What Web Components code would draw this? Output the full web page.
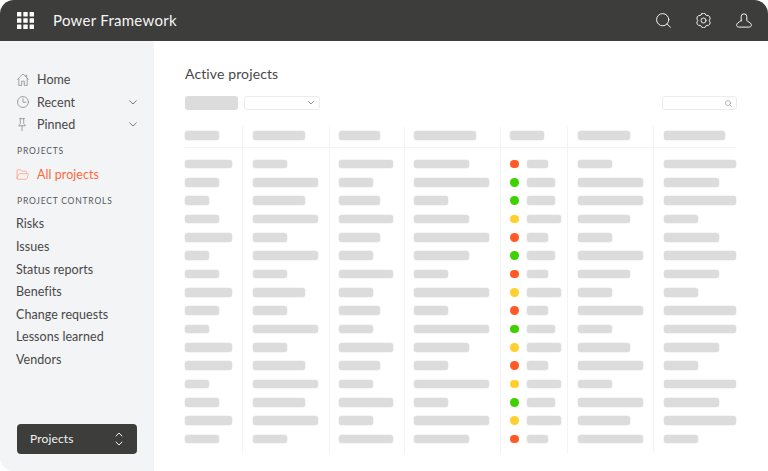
<!DOCTYPE html>
<html lang="en"><head><meta charset="utf-8"><title>Power Framework</title>
<style>html,body{margin:0;padding:0;background:#fff}body{font-family:"Lato","Noto Sans",sans-serif}</style></head>
<body>
<pf-app>
  <pf-topbar slot="top" title-text="Power Framework"></pf-topbar>
  <pf-sidebar slot="side">
    <pf-nav icon="home">Home</pf-nav>
    <pf-nav icon="clock" chevron>Recent</pf-nav>
    <pf-nav icon="pin" chevron>Pinned</pf-nav>
    <pf-label style="margin-top:8.500px">PROJECTS</pf-label>
    <pf-nav icon="folder" active style="margin-top:4.700px">All projects</pf-nav>
    <pf-label style="margin-top:8.700px">PROJECT CONTROLS</pf-label>
    <pf-nav plain style="margin-top:4.200px">Risks</pf-nav>
    <pf-nav plain>Issues</pf-nav>
    <pf-nav plain>Status reports</pf-nav>
    <pf-nav plain>Benefits</pf-nav>
    <pf-nav plain>Change requests</pf-nav>
    <pf-nav plain>Lessons learned</pf-nav>
    <pf-nav plain>Vendors</pf-nav>
    <pf-switch slot="foot">Projects</pf-switch>
  </pf-sidebar>
  <pf-main slot="main">
    <span slot="title">Active projects</span>
    <pf-toolbar slot="toolbar"></pf-toolbar>
    <pf-table slot="table"></pf-table>
  </pf-main>
</pf-app>
<script>
const def=(name,html,init)=>customElements.define(name,class extends HTMLElement{
  constructor(){super();this.attachShadow({mode:'open'}).innerHTML=html;}
  connectedCallback(){init&&init.call(this,this.shadowRoot);}
});
const s='fill="none" stroke="currentColor" stroke-linecap="round" stroke-linejoin="round"';
const ICONS={
 home:`<svg width="12" height="13" viewBox="0 0 12 13" ${s} stroke-width=".8"><path d="M.6 6.400 6 .9l5.400 5.500M1.800 5.600v6.800h2.900V8.200h2.600v4.200h2.900V5.600M8.600 2.200h1.200v1.900"/></svg>`,
 clock:`<svg width="12" height="12" viewBox="0 0 12 12" ${s} stroke-width=".8"><circle cx="6" cy="6" r="5.500"/><path d="M6 2.600V6.300H9"/></svg>`,
 pin:`<svg width="10" height="13" viewBox="0 0 10 13" ${s} stroke-width=".8"><path d="M2.600.6h4.800M3.300.6v5.200L1.600 7.800h6.800L6.700 5.800V.6M5 7.800v4.800"/></svg>`,
 folder:`<svg width="13" height="11" viewBox="0 0 13 11" ${s} stroke-width=".9"><path d="M1 9.600V1.600q0-.8.8-.8h2.700l1.200 1.400h4q.9 0 .9.9v.9M1 9.600q.1.700.8.700h8.200q.6 0 .9-.6l1.500-4.200q.2-.8-.6-.8H3.400q-.6 0-.8.6z"/></svg>`
};
const CHEV=`<svg width="8" height="5" viewBox="0 0 8 5" ${s} stroke-width="1"><path d="M.7.8 4 4 7.300.8"/></svg>`;
const gear=(()=>{const c=7.5,p=(a,r)=>{const t=a*Math.PI/180;return (c+r*Math.cos(t)).toFixed(2)+' '+(c+r*Math.sin(t)).toFixed(2);};
 let d='';for(let k=0;k<6;k++){const a=k*60-90;d+=(k?'':'M'+p(a-15,6.9))+'Q'+p(a,7.9)+' '+p(a+15,6.9)+'Q'+p(a+30,4.7)+' '+p(a+45,6.9);}return d+'Z';})();

def('pf-app',`<style>:host{display:grid;grid-template-rows:41px 430px;width:768px;height:471px;overflow:hidden;background:#fff}
.b{display:flex;min-height:0}</style><slot name="top"></slot><div class="b"><slot name="side"></slot><slot name="main"></slot></div>`);

def('pf-topbar',`<style>:host{display:flex;align-items:center;background:#3d3d3b;color:#fff;border-radius:14px 14px 0 0;padding:0 16px 0 17px;height:41px;box-sizing:border-box}
.t{font-size:15px;letter-spacing:.28px;margin-left:19px;flex:1;color:#f6f6f5;padding-bottom:1px}
.r{display:flex;align-items:center;gap:25px;color:#f2f2f1}svg{display:block}</style>
<svg width="17" height="17" viewBox="0 0 17 17" fill="#fff"><rect width="4.400" height="4.400" rx=".5"/><rect x="6.300" width="4.400" height="4.400" rx=".5"/><rect x="12.600" width="4.400" height="4.400" rx=".5"/><rect y="6.300" width="4.400" height="4.400" rx=".5"/><rect x="6.300" y="6.300" width="4.400" height="4.400" rx=".5"/><rect x="12.600" y="6.300" width="4.400" height="4.400" rx=".5"/><rect y="12.600" width="4.400" height="4.400" rx=".5"/><rect x="6.300" y="12.600" width="4.400" height="4.400" rx=".5"/><rect x="12.600" y="12.600" width="4.400" height="4.400" rx=".5"/></svg>
<span class="t"></span>
<div class="r">
<svg width="15" height="15" viewBox="0 0 15 15" ${s} stroke-width="1"><circle cx="6.700" cy="6.700" r="6.100"/><path d="M11.200 11.100 14.500 14.400"/></svg>
<svg width="15" height="15" viewBox="0 0 15 15" ${s} stroke-width="1"><path d="${gear}"/><circle cx="7.500" cy="7.500" r="2.500"/></svg>
<svg width="16" height="15" viewBox="0 0 16 15" ${s} stroke-width="1"><path d="M5.200 7.800V3.600a2.800 2.800 0 0 1 5.600 0v4.200c0 .4 3.800 1.500 4.400 3.400.6 1.700-.3 2.900-2 2.900H2.800c-1.700 0-2.600-1.200-2-2.900.6-1.900 4.400-3 4.400-3.400z"/></svg>
</div>`,function(r){r.querySelector('.t').textContent=this.getAttribute('title-text');});

def('pf-sidebar',`<style>:host{display:flex;flex-direction:column;width:154px;flex:none;background:#f3f4f6;border-radius:0 0 0 14px;padding:27.200px 0 17px;box-sizing:border-box}
.f{margin-top:auto}</style><slot></slot><div class="f"><slot name="foot"></slot></div>`);

def('pf-nav',`<style>:host{display:flex;align-items:center;height:22.600px;color:#484848;font-size:12.500px;letter-spacing:.05px;padding:0 17px 0 17px;position:relative}
:host([plain]){padding-left:16px}
:host([active]){color:#ff6a3c}
.i{width:20px;flex:none;display:flex;color:#8b8d90}
:host([active]) .i{color:#ffa98c;margin-left:-1px;width:21px}
:host([plain]) .i{display:none}
.t{flex:1}svg{display:block}.c{color:#77797b;display:flex;margin-left:auto}</style>
<span class="i"></span><span class="t"><slot></slot></span><span class="c"></span>`,function(r){
 const ic=this.getAttribute('icon'); if(ic) r.querySelector('.i').innerHTML=ICONS[ic];
 if(this.hasAttribute('chevron')) r.querySelector('.c').innerHTML=CHEV;});

def('pf-label',`<style>:host{display:block;height:14px;line-height:14px;font-size:8.500px;letter-spacing:.8px;color:#55575a;padding-left:17px}</style><slot></slot>`);

def('pf-switch',`<style>:host{display:flex;align-items:center;justify-content:space-between;margin:0 17px;height:30px;width:120px;box-sizing:border-box;padding:0 14px 0 13px;background:#3d3d3b;color:#f4f4f3;border-radius:4px;font-size:12px;letter-spacing:.15px}svg{display:block}span{padding-bottom:1px}</style>
<span><slot></slot></span><svg width="8" height="14" viewBox="0 0 8 14" ${s} stroke-width="1"><path d="M1 4 4 1l3 3M1 10l3 3 3-3"/></svg>`);

def('pf-main',`<style>:host{display:flex;flex-direction:column;flex:1;min-width:0;padding:0 31px;box-sizing:border-box}
.h{height:18px;line-height:18px;margin-top:24px;font-size:14px;letter-spacing:.12px;color:#484848}
.tb{margin-top:13px}.tt{margin-top:16px}</style>
<div class="h"><slot name="title"></slot></div><div class="tb"><slot name="toolbar"></slot></div><div class="tt"><slot name="table"></slot></div>`);

def('pf-skel',`<style>:host{display:block;height:8.600px;background:#dcdcdc;border-radius:2.500px;box-shadow:0 0 0 .5px #eee}</style>`);

def('pf-toolbar',`<style>:host{display:flex;align-items:center;height:14px}
.k{width:53px;height:14px;background:#dcdcdc;border-radius:3px}
.b{box-sizing:border-box;height:14px;border:1px solid #ececec;border-radius:3px;background:#fff;display:flex;align-items:center;justify-content:flex-end}
.d{width:75.500px;margin-left:6px;padding-right:5px;color:#888}
.s{width:75px;margin-left:auto;padding-right:4px;color:#999}svg{display:block}</style>
<div class="k"></div><div class="b d"><svg width="6" height="4" viewBox="0 0 6 4" ${s} stroke-width=".9"><path d="M.6.6 3 3 5.400.6"/></svg></div>
<div class="b s"><svg width="7" height="7" viewBox="0 0 7 7" ${s} stroke-width=".7"><circle cx="3" cy="3" r="2.500"/><path d="M4.900 4.900 6.500 6.500"/></svg></div>`);

const COLS=[
 {w:57.3,h:34,d:[47,34,24,34,47,24,34,47,34,24,47,47,24,34,47,34]},
 {w:86.4,h:52,d:[34,65,52,65,34,65,34,52,34,65,34,52,65,52,65,34]},
 {w:75,h:41,d:[54,34,41,54,41,34,54,34,41,34,54,41,34,54,34,54]},
 {w:96,h:62,d:[55,75,34,55,75,55,34,75,34,75,55,34,75,34,75,55]},
 {w:67.6,h:34,d:[21,28,28,34,21,28,21,34,21,28,34,21,34,28,34,21],dots:'rggyrgryrgyrygyr'},
 {w:86,h:52,d:[34,65,65,52,34,65,52,34,65,34,52,65,34,65,52,65]},
 {w:83.2,h:61,d:[72,55,72,34,55,72,55,34,72,72,55,34,72,55,72,34]}
];
const DOT={r:'#ff5a26',g:'#3ed100',y:'#ffcf2e'};
def('pf-table',`<style>:host{display:flex;width:551.500px}
.col{box-sizing:border-box;flex:none}
.col+.col{border-left:1px solid #f3f3f3}
.hd{height:15.700px;border-bottom:1px solid #f3f3f3;padding:5.300px 0 0 9.700px}
.r{height:18.330px;display:flex;align-items:center;padding-left:9.700px;box-sizing:border-box}
.first .hd,.first .r{padding-left:0}
.bd{padding:6.830px 0 5px}
.dot{width:8.800px;height:8.800px;border-radius:50%;flex:none;margin-right:8.200px}</style>`,function(r){
 COLS.forEach((c,n)=>{
  const col=document.createElement('div');col.className='col'+(n?'':' first');col.style.width=c.w+'px';
  col.innerHTML=`<div class="hd"><pf-skel style="width:${c.h}px"></pf-skel></div><div class="bd">`+
   c.d.map((w,i)=>`<div class="r">${c.dots?`<span class="dot" style="background:${DOT[c.dots[i]]}"></span>`:''}<pf-skel style="width:${w}px"></pf-skel></div>`).join('')+`</div>`;
  r.appendChild(col);
 });
});
</script>
</body></html>
